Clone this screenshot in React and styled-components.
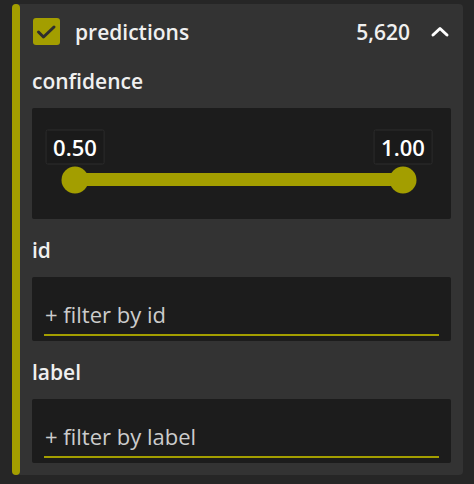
import React from 'react';
import styled, { createGlobalStyle } from 'styled-components';

const YELLOW = '#a39e00';

const GlobalStyle = createGlobalStyle`
  html, body {
    margin: 0;
    background: #262626;
    font-family: "Open Sans", "Liberation Sans", sans-serif;
  }
`;

const Page = styled.div`
  padding: 4px 11px 8px 12px;
`;

const Panel = styled.div`
  display: flex;
  background: #333333;
  border-radius: 4px;
`;

const ColorBar = styled.div`
  width: 8px;
  flex: none;
  background: ${(p) => p.color};
  border-radius: 4px;
`;

const Content = styled.div`
  flex: 1;
  display: flex;
  flex-direction: column;
  padding: 0 12px 12px;
  color: #f0f0f0;
`;

const Header = styled.div`
  display: flex;
  align-items: center;
  height: 27px;
  padding: 14px 0 5px 1px;
`;

const Checkbox = styled.div`
  width: 27px;
  height: 27px;
  flex: none;
  border-radius: 3px;
  background: ${(p) => p.color};
  display: flex;
  align-items: center;
  justify-content: center;
`;

const Title = styled.span`
  margin-left: 15px;
  font-size: 21px;
  font-weight: 600;
  flex: 1;
`;

const Count = styled.span`
  font-size: 21px;
  font-weight: 600;
  margin-right: 19px;
`;

const Label = styled.div`
  font-size: 21px;
  line-height: 24px;
  font-weight: 600;
  padding: 19px 0 15px;
`;

const Well = styled.div`
  background: #1c1c1c;
  border-radius: 2px;
`;

const SliderWell = styled(Well)`
  padding: 65px 48px 33px 43px;
`;

const Track = styled.div`
  position: relative;
  height: 13px;
  border-radius: 7px;
  background: ${(p) => p.color};
`;

const Thumb = styled.div`
  position: absolute;
  top: 50%;
  width: 27px;
  height: 27px;
  border-radius: 50%;
  background: ${(p) => p.color};
  transform: translate(-50%, -50%);
`;

const ValueTag = styled.div`
  position: absolute;
  bottom: 29px;
  left: 50%;
  transform: translateX(-50%);
  height: 33px;
  padding: 0 7px;
  display: flex;
  align-items: center;
  background: #1a1a1a;
  border: 1px solid #2c2c2c;
  border-radius: 2px;
  font-size: 22px;
  font-weight: 600;
  color: #ffffff;
  white-space: nowrap;
`;

const InputWell = styled(Well)`
  height: 64px;
  box-sizing: border-box;
  display: flex;
  align-items: flex-end;
  padding: 0 12px 5px;
`;

const FilterInput = styled.input`
  width: 100%;
  height: 38px;
  box-sizing: border-box;
  padding: 0 0 4px 1px;
  background: transparent;
  border: none;
  border-bottom: 2px solid ${(p) => p.color};
  outline: none;
  font-family: inherit;
  font-size: 22px;
  color: #dddddd;

  &::placeholder {
    color: #cccccc;
    opacity: 1;
  }
`;

const Check = () => (
  <svg width="27" height="27" viewBox="0 0 27 27">
    <polyline
      points="5.5,14 10.5,19 21,9"
      fill="none"
      stroke="#2e2e2e"
      strokeWidth="3"
      strokeLinecap="round"
      strokeLinejoin="round"
    />
  </svg>
);

const ChevronUp = () => (
  <svg width="22" height="22" viewBox="0 0 22 22">
    <polyline
      points="4,14 11,7.5 18,14"
      fill="none"
      stroke="#ffffff"
      strokeWidth="3"
      strokeLinecap="round"
      strokeLinejoin="round"
    />
  </svg>
);

const RangeSlider = ({ min, max, values, color }) => (
  <SliderWell>
    <Track color={color}>
      {values.map((v) => (
        <Thumb
          key={v}
          color={color}
          style={{ left: `${((v - min) / (max - min)) * 100}%` }}
        >
          <ValueTag>{v.toFixed(2)}</ValueTag>
        </Thumb>
      ))}
    </Track>
  </SliderWell>
);

const FilterField = ({ name, color }) => (
  <>
    <Label>{name}</Label>
    <InputWell>
      <FilterInput color={color} placeholder={`+ filter by ${name}`} />
    </InputWell>
  </>
);

export default function App() {
  return (
    <Page>
      <GlobalStyle />
      <Panel>
        <ColorBar color={YELLOW} />
        <Content>
          <Header>
            <Checkbox color={YELLOW}>
              <Check />
            </Checkbox>
            <Title>predictions</Title>
            <Count>5,620</Count>
            <ChevronUp />
          </Header>
          <Label>confidence</Label>
          <RangeSlider min={0.5} max={1} values={[0.5, 1]} color={YELLOW} />
          <FilterField name="id" color={YELLOW} />
          <FilterField name="label" color={YELLOW} />
        </Content>
      </Panel>
    </Page>
  );
}
